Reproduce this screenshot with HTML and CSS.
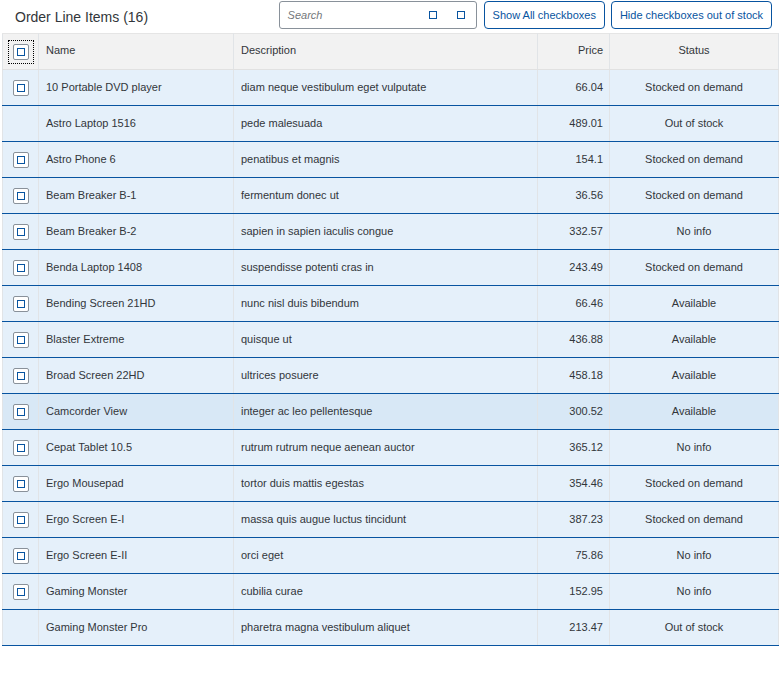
FILE: index.html
```html
<!DOCTYPE html>
<html lang="en">
<head>
  <meta charset="UTF-8">
  <title>Order Line Items</title>
  <link rel="stylesheet" href="styles.css">
</head>
<body>
  <div class="toolbar">
    <h2 class="title">Order Line Items (16)</h2>
    <div class="actions">
      <div class="search">
        <span class="placeholder">Search</span>
        <span class="sq"></span>
        <span class="sq"></span>
      </div>
      <button class="btn">Show All checkboxes</button>
      <button class="btn">Hide checkboxes out of stock</button>
    </div>
  </div>

  <table class="items">
    <colgroup>
      <col class="c-sel">
      <col class="c-name">
      <col class="c-desc">
      <col class="c-price">
      <col class="c-status">
    </colgroup>
    <thead>
      <tr>
        <th class="sel"><span class="focus"><span class="cb"><span></span></span></span></th>
        <th>Name</th>
        <th>Description</th>
        <th class="num">Price</th>
        <th class="center">Status</th>
      </tr>
    </thead>
    <tbody>
      <tr><td class="sel"><span class="cb"><span></span></span></td><td>10 Portable DVD player</td><td>diam neque vestibulum eget vulputate</td><td class="num">66.04</td><td class="center">Stocked on demand</td></tr>
      <tr><td class="sel"></td><td>Astro Laptop 1516</td><td>pede malesuada</td><td class="num">489.01</td><td class="center">Out of stock</td></tr>
      <tr><td class="sel"><span class="cb"><span></span></span></td><td>Astro Phone 6</td><td>penatibus et magnis</td><td class="num">154.1</td><td class="center">Stocked on demand</td></tr>
      <tr><td class="sel"><span class="cb"><span></span></span></td><td>Beam Breaker B-1</td><td>fermentum donec ut</td><td class="num">36.56</td><td class="center">Stocked on demand</td></tr>
      <tr><td class="sel"><span class="cb"><span></span></span></td><td>Beam Breaker B-2</td><td>sapien in sapien iaculis congue</td><td class="num">332.57</td><td class="center">No info</td></tr>
      <tr><td class="sel"><span class="cb"><span></span></span></td><td>Benda Laptop 1408</td><td>suspendisse potenti cras in</td><td class="num">243.49</td><td class="center">Stocked on demand</td></tr>
      <tr><td class="sel"><span class="cb"><span></span></span></td><td>Bending Screen 21HD</td><td>nunc nisl duis bibendum</td><td class="num">66.46</td><td class="center">Available</td></tr>
      <tr><td class="sel"><span class="cb"><span></span></span></td><td>Blaster Extreme</td><td>quisque ut</td><td class="num">436.88</td><td class="center">Available</td></tr>
      <tr><td class="sel"><span class="cb"><span></span></span></td><td>Broad Screen 22HD</td><td>ultrices posuere</td><td class="num">458.18</td><td class="center">Available</td></tr>
      <tr class="hover"><td class="sel"><span class="cb"><span></span></span></td><td>Camcorder View</td><td>integer ac leo pellentesque</td><td class="num">300.52</td><td class="center">Available</td></tr>
      <tr><td class="sel"><span class="cb"><span></span></span></td><td>Cepat Tablet 10.5</td><td>rutrum rutrum neque aenean auctor</td><td class="num">365.12</td><td class="center">No info</td></tr>
      <tr><td class="sel"><span class="cb"><span></span></span></td><td>Ergo Mousepad</td><td>tortor duis mattis egestas</td><td class="num">354.46</td><td class="center">Stocked on demand</td></tr>
      <tr><td class="sel"><span class="cb"><span></span></span></td><td>Ergo Screen E-I</td><td>massa quis augue luctus tincidunt</td><td class="num">387.23</td><td class="center">Stocked on demand</td></tr>
      <tr><td class="sel"><span class="cb"><span></span></span></td><td>Ergo Screen E-II</td><td>orci eget</td><td class="num">75.86</td><td class="center">No info</td></tr>
      <tr><td class="sel"><span class="cb"><span></span></span></td><td>Gaming Monster</td><td>cubilia curae</td><td class="num">152.95</td><td class="center">No info</td></tr>
      <tr><td class="sel"></td><td>Gaming Monster Pro</td><td>pharetra magna vestibulum aliquet</td><td class="num">213.47</td><td class="center">Out of stock</td></tr>
    </tbody>
  </table>
</body>
</html>
```

FILE: styles.css
```css
body {
  margin: 0;
  font-family: "Liberation Sans", Arial, sans-serif;
  font-size: 11px;
  color: #32363a;
  background-color: #fff;
}

.toolbar {
  display: flex;
  align-items: center;
  height: 33px;
  padding: 0 12px 0 15px;
}

.title {
  margin: 0;
  font-size: 14px;
  font-weight: normal;
  color: #32363a;
  padding-top: 1px;
}

.actions {
  margin-left: auto;
  display: flex;
  align-items: center;
  gap: 6px;
  margin-top: -3px;
}

.search {
  width: 198px;
  height: 28px;
  box-sizing: border-box;
  border: 1px solid #89919a;
  border-radius: 3px;
  display: flex;
  align-items: center;
  padding: 0 11px 0 8px;
  margin-right: 1px;
}

.search .placeholder {
  flex: 1;
  font-style: italic;
  color: #74777a;
}

.search .sq {
  width: 8px;
  height: 8px;
  box-sizing: border-box;
  border: 1.5px solid #0854a0;
  margin-left: 20px;
}

.btn {
  height: 28px;
  padding: 0 8px;
  border: 1px solid #0854a0;
  border-radius: 4px;
  background-color: #fff;
  color: #0854a0;
  font-family: inherit;
  font-size: 11px;
}

.items {
  margin-left: 2px;
  width: 777px;
  table-layout: fixed;
  border-collapse: collapse;
}

.c-sel { width: 36px; }
.c-name { width: 195px; }
.c-desc { width: 304px; }
.c-price { width: 72px; }
.c-status { width: 169px; }

.items th,
.items td {
  height: 34px;
  padding: 0 7px 1px;
  text-align: left;
  white-space: nowrap;
  border-left: 1px solid #e1e4e7;
  border-right: 1px solid #e1e4e7;
}

.items th {
  height: 32px;
  font-weight: normal;
  background-color: #f2f2f2;
  border-top: 1px solid #e5e5e5;
  border-bottom: 1px solid #e1e1e1;
  padding-bottom: 3px;
}

.items td {
  background-color: #e5f0fa;
  border-bottom: 1px solid #0854a0;
}

.items tr.hover td {
  background-color: #d8e8f6;
}

.items .num { text-align: right; padding-right: 6px; }
.items .center { text-align: center; }

.items .sel {
  padding: 0;
  text-align: center;
}

.cb {
  display: inline-flex;
  align-items: center;
  justify-content: center;
  width: 16px;
  height: 16px;
  box-sizing: border-box;
  border: 1px solid #89919a;
  border-radius: 2px;
  background-color: #fff;
  vertical-align: middle;
}

.cb span {
  width: 8px;
  height: 8px;
  box-sizing: border-box;
  border: 1.5px solid #0854a0;
}

.focus {
  display: inline-flex;
  padding: 3px 4px;
  outline: 1px dotted #000;
  vertical-align: middle;
}
```
